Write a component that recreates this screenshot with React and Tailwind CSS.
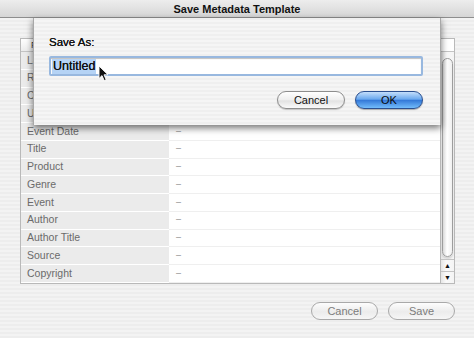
import React from "react";

const rows = [
  "Label",
  "Rating",
  "Comment",
  "URL",
  "Event Date",
  "Title",
  "Product",
  "Genre",
  "Event",
  "Author",
  "Author Title",
  "Source",
  "Copyright",
];

function Cursor() {
  return (
    <svg width="12" height="17" viewBox="0 0 12 17" className="absolute left-[98px] top-[65px]">
      <path
        d="M1 1 L1 13.5 L4 10.6 L6.2 15.6 L8.2 14.7 L6 9.8 L10 9.8 Z"
        fill="#111"
        stroke="#fff"
        strokeWidth="0.9"
        strokeLinejoin="round"
      />
    </svg>
  );
}

export default function App() {
  return (
    <div
      className="relative w-[474px] h-[338px] overflow-hidden bg-[repeating-linear-gradient(180deg,#ededed_0px,#ededed_2px,#f3f3f3_2px,#f3f3f3_4px)] text-[#1a1a1a]"
      style={{ fontFamily: '"Liberation Sans", Arial, sans-serif' }}
    >
      {/* title bar */}
      <div className="h-[18px] flex items-center justify-center bg-[linear-gradient(180deg,#ededed,#d6d6d6)] border-b border-[#8e8e8e]">
        <span className="text-[11px] font-bold text-[#111] leading-none pt-[1px]">Save Metadata Template</span>
      </div>

      <div className="relative pt-[20px] pl-[20px] pr-[19px]">
        {/* table */}
        <div className="flex border border-[#b9b9b9] bg-white">
          <div className="flex-1 flex flex-col">
            <div className="h-[13px] flex border-b border-[#c4c4c4] bg-[linear-gradient(180deg,#ffffff,#ececec)]">
              <div className="w-[148px] border-r border-[#c4c4c4] pl-[10px] text-[9px] leading-[12px] text-[#444]">Field</div>
              <div className="flex-1 pl-[7px] text-[9px] leading-[12px] text-[#444]">Value</div>
            </div>
            {rows.map((r) => (
              <div key={r} className="h-[17.75px] flex">
                <div className="w-[148px] bg-[#ebebeb] border-b border-white pl-[6px] flex items-center text-[10.5px] text-[#6a6a6a]">
                  {r}
                </div>
                <div className="flex-1 bg-white border-b border-[#efefef] pl-[7px] flex items-center text-[9px] text-[#8a8a8a]">
                  –
                </div>
              </div>
            ))}
          </div>
          {/* scrollbar */}
          <div className="w-[14px] flex flex-col border-l border-[#b9b9b9] bg-[linear-gradient(90deg,#e6e6e6,#fafafa_40%,#f4f4f4)]">
            <div className="h-[13px] border-b border-[#c4c4c4] bg-white"></div>
            <div className="flex-1 flex flex-col px-[1px] pt-[6px] pb-[2px]">
              <div className="flex-1 rounded-full border border-[#9d9d9d] bg-[linear-gradient(90deg,#d8d8d8,#ffffff_45%,#f0f0f0)] shadow-[0_2px_2px_rgba(0,0,0,0.15)]"></div>
            </div>
            <div className="h-[12px] border-t border-[#c4c4c4] flex items-center justify-center text-[7px] leading-none text-[#111]">▲</div>
            <div className="h-[12px] border-t border-[#c4c4c4] flex items-center justify-center text-[7px] leading-none text-[#111]">▼</div>
          </div>
        </div>

        {/* bottom buttons */}
        <div className="flex justify-end gap-[10px] mt-[18px]">
          <div className="w-[67px] h-[18px] rounded-full border border-[#a9a9a9] bg-[linear-gradient(180deg,#fdfdfd,#ececec_55%,#f6f6f6)] flex items-center justify-center text-[11px] text-[#7c7c7c]">
            Cancel
          </div>
          <div className="w-[67px] h-[18px] rounded-full border border-[#a9a9a9] bg-[linear-gradient(180deg,#fdfdfd,#ececec_55%,#f6f6f6)] flex items-center justify-center text-[11px] text-[#7c7c7c]">
            Save
          </div>
        </div>

        {/* sheet */}
        <div className="absolute top-0 left-[33px] w-[408px] h-[107px] bg-[repeating-linear-gradient(180deg,#efefef_0px,#efefef_2px,#f5f5f5_2px,#f5f5f5_4px)] shadow-[0_3px_7px_rgba(0,0,0,0.55)] border-x border-[#a8a8a8] pl-[15px] pr-[17px] pt-[17px]">
          <div className="text-[11.5px] leading-[14px] text-[#111] [text-shadow:0_0_0.4px_#111]">Save As:</div>
          <div className="mt-[7px] h-[20px] rounded-[2px] border-2 border-[#98b8df] bg-white shadow-[inset_0_1px_1px_rgba(0,0,0,0.25)] flex items-center pl-[1px]">
            <span className="bg-[#b5d3f5] px-[1px] text-[12.5px] leading-[15px] text-[#111] [text-shadow:0_0_0.5px_#111]">Untitled</span>
          </div>
          <div className="mt-[15px] flex justify-end gap-[10px]">
            <div className="w-[68px] h-[18px] rounded-full border border-[#8d8d8d] bg-[linear-gradient(180deg,#ffffff,#eeeeee_50%,#e2e2e2_55%,#fafafa)] flex items-center justify-center text-[11px] text-[#111] shadow-[0_1px_1px_rgba(0,0,0,0.2)]">
              Cancel
            </div>
            <div className="w-[68px] h-[18px] rounded-full border border-[#2a4f8f] bg-[linear-gradient(180deg,#c4defb,#6aa8ee_45%,#3479d8_52%,#72bcfb)] flex items-center justify-center text-[11px] text-[#0a0a0a] shadow-[0_1px_1px_rgba(0,0,0,0.3)]">
              OK
            </div>
          </div>
        </div>
      </div>

      <Cursor />
    </div>
  );
}
